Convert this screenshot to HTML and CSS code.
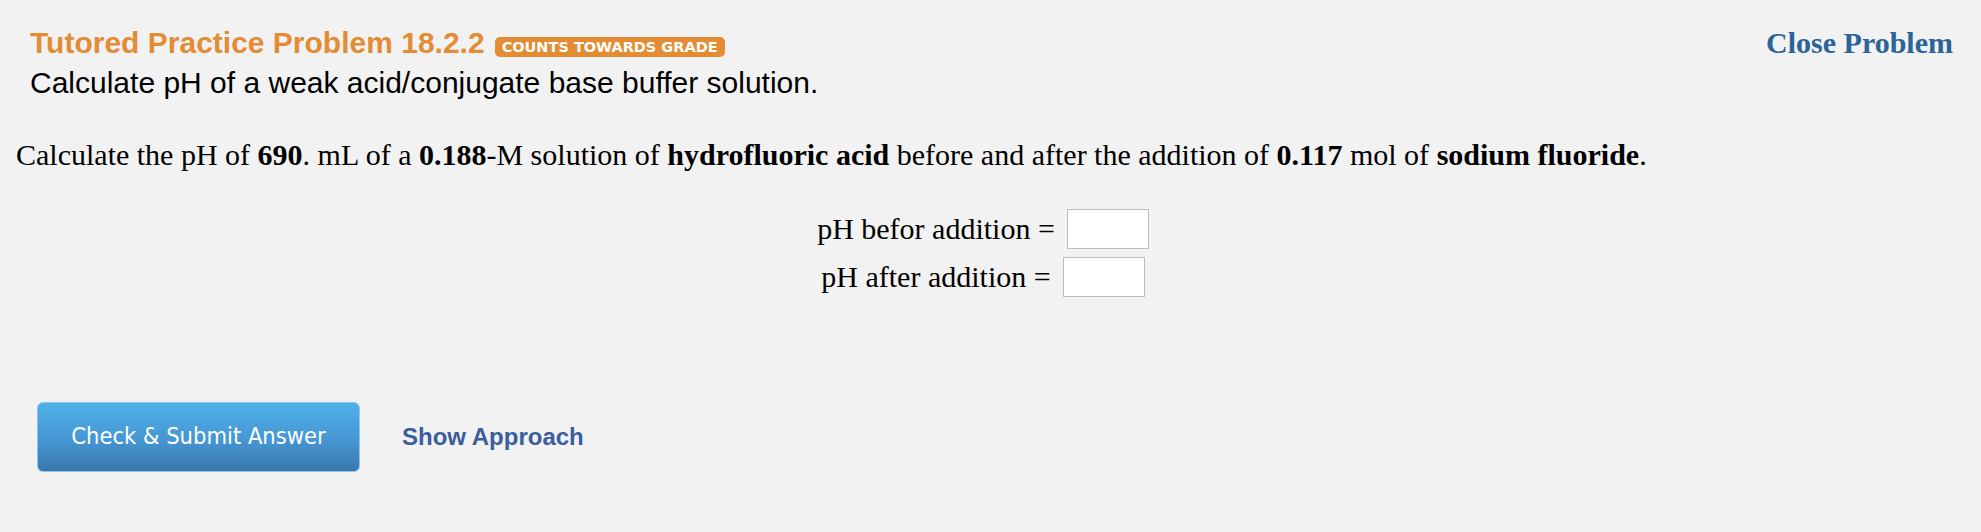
FILE: index.html
```html
<!DOCTYPE html>
<html lang="en">
<head>
<meta charset="utf-8">
<title>Tutored Practice Problem 18.2.2</title>
<link rel="stylesheet" href="styles.css">
</head>
<body>
<div class="page">
  <header class="problem-header">
    <div class="heading">
      <div class="title-line"><span class="title">Tutored Practice Problem 18.2.2</span><span class="badge">COUNTS TOWARDS GRADE</span></div>
      <div class="subtitle">Calculate pH of a weak acid/conjugate base buffer solution.</div>
    </div>
    <a class="close-link" href="#">Close Problem</a>
  </header>

  <section class="problem">
    <p class="question">Calculate the pH of <b>690</b>. mL of a <b>0.188</b>-M solution of <b>hydrofluoric acid</b> before and after the addition of <b>0.117</b> mol of <b>sodium fluoride</b>.</p>
    <div class="answers">
      <div class="answer-row"><span class="answer-label">pH befor addition =</span><span class="answer-box"></span></div>
      <div class="answer-row"><span class="answer-label">pH after addition =</span><span class="answer-box"></span></div>
    </div>
  </section>

  <div class="actions">
    <button class="submit-btn" type="button">Check &amp; Submit Answer</button>
    <a class="approach-link" href="#">Show Approach</a>
  </div>
</div>
</body>
</html>
```

FILE: styles.css
```css
html, body {
  margin: 0;
  padding: 0;
  background: #f2f2f2;
}

.page {
  min-height: 532px;
  background: #f2f2f2;
}

.problem-header {
  display: flex;
  justify-content: space-between;
  align-items: flex-start;
  padding: 23px 28px 0 30px;
}

.title-line {
  font-family: "Liberation Sans", Arial, sans-serif;
  font-size: 30px;
  line-height: 40px;
  white-space: nowrap;
}

.title {
  font-weight: bold;
  color: #e38c33;
}

.badge {
  display: inline-block;
  margin-left: 10px;
  padding: 0 7px;
  height: 20px;
  line-height: 20px;
  border-radius: 5px;
  background: #e38c33;
  color: #ffffff;
  font-family: "DejaVu Sans", Verdana, sans-serif;
  font-weight: bold;
  font-size: 14.5px;
  vertical-align: 1.5px;
}

.subtitle {
  font-family: "Liberation Sans", Arial, sans-serif;
  font-size: 30px;
  line-height: 40px;
  color: #000;
}

.close-link {
  font-family: "Liberation Serif", "Times New Roman", serif;
  font-weight: bold;
  font-size: 30px;
  line-height: 40px;
  color: #2b6499;
  text-decoration: none;
}

.problem {
  padding: 0 31px 0 16px;
}

.question {
  margin: 34px 0 0 0;
  font-family: "Liberation Serif", "Times New Roman", serif;
  font-size: 30px;
  line-height: 36px;
  color: #000;
  white-space: nowrap;
}

.answers {
  margin-top: 36px;
  display: flex;
  flex-direction: column;
  align-items: center;
  gap: 8px;
}

.answer-row {
  display: flex;
  align-items: center;
  gap: 12px;
  font-family: "Liberation Serif", "Times New Roman", serif;
  font-size: 30px;
  color: #000;
}

.answer-box {
  display: block;
  width: 80px;
  height: 38px;
  background: #ffffff;
  border: 1px solid #bdbdbd;
}

.actions {
  margin-top: 105px;
  padding-left: 37px;
  display: flex;
  align-items: center;
  gap: 42px;
}

.submit-btn {
  box-sizing: border-box;
  width: 323px;
  height: 70px;
  border: 1px solid #8fc6ec;
  border-radius: 6px;
  background: linear-gradient(to bottom, #4fb0ea 0%, #4596d2 55%, #3a77ad 100%);
  color: #ffffff;
  font-family: "DejaVu Sans Condensed", "DejaVu Sans", Tahoma, sans-serif;
  font-stretch: condensed;
  font-size: 23.5px;
  padding: 0 0 2px 0;
  cursor: pointer;
}

.approach-link {
  font-family: "Liberation Sans", Arial, sans-serif;
  font-weight: bold;
  font-size: 24px;
  color: #3a5e9f;
  text-decoration: none;
}
```
